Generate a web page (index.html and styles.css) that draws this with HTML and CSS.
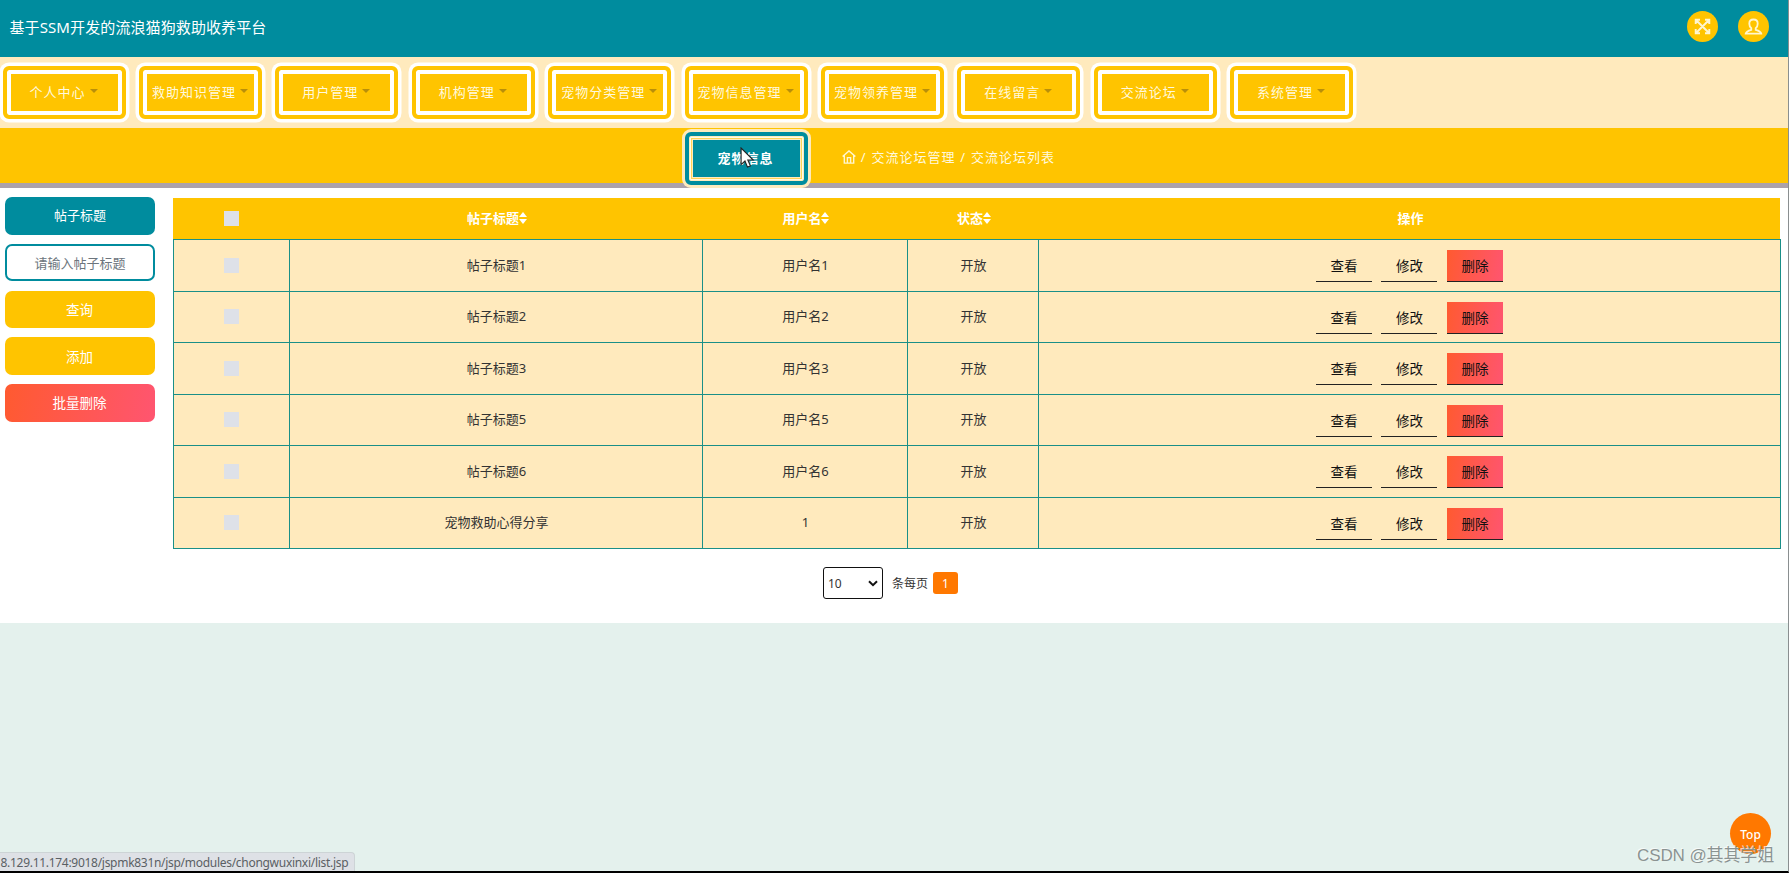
FILE: index.html
```html
<!DOCTYPE html>
<html lang="zh-CN">
<head>
<meta charset="utf-8">
<title>基于SSM开发的流浪猫狗救助收养平台</title>
<link rel="stylesheet" href="styles.css">
</head>
<body>
<div class="page">
<header class="topbar">
  <h1 class="brand">基于SSM开发的流浪猫狗救助收养平台</h1>
  <div class="tools">
    <span class="tool"><svg width="31" height="31" viewBox="0 0 31 31" fill="none" stroke="#fff6d0" stroke-width="1.9"><path d="M9 9l13 13M22 9L9 22M8.700 13V8.700H13M18 8.700h4.300V13M22.300 18v4.300H18M13 22.300H8.700V18"/></svg></span>
    <span class="tool"><svg width="31" height="31" viewBox="0 0 31 31" fill="none" stroke="#fff6d0" stroke-width="1.800"><path d="M13.300 17.200c-1.500-1.300-2-3-2-4.500 0-2.700 1.700-4.200 4.200-4.200s4.200 1.500 4.200 4.200c0 1.500-.5 3.200-2 4.500v1.600c3 .8 5.300 1.700 5.600 3.800H7.700c.3-2.100 2.600-3 5.600-3.800z"/></svg></span>
  </div>
</header>
<nav class="menu">
  <a class="item">个人中心<i class="caret"></i></a>
  <a class="item">救助知识管理<i class="caret"></i></a>
  <a class="item">用户管理<i class="caret"></i></a>
  <a class="item">机构管理<i class="caret"></i></a>
  <a class="item">宠物分类管理<i class="caret"></i></a>
  <div class="holder">
    <a class="item">宠物信息管理<i class="caret"></i></a>
    <a class="item sub">宠物信息</a>
  </div>
  <a class="item">宠物领养管理<i class="caret"></i></a>
  <a class="item">在线留言<i class="caret"></i></a>
  <a class="item">交流论坛<i class="caret"></i></a>
  <a class="item">系统管理<i class="caret"></i></a>
</nav>
<div class="crumbs">
  <svg width="14" height="14" viewBox="0 0 14 14" fill="none" stroke="#fff6d0" stroke-width="1.400"><path d="M.6 6.500L7 .9l6.400 5.600M2.300 5.500v7.600h9.400V5.500M5.400 13V7.600h3.200V13"/></svg>
  <span class="sep">/</span><span>交流论坛管理</span><span class="sep">/</span><span>交流论坛列表</span>
</div>
<main class="content">
  <aside class="side">
    <div class="btn teal">帖子标题</div>
    <div class="btn field">请输入帖子标题</div>
    <div class="btn">查询</div>
    <div class="btn">添加</div>
    <div class="btn red">批量删除</div>
  </aside>
  <section class="list">
    <div class="row head"><div><i class="box"></i></div><div>帖子标题<i class="sort"></i></div><div>用户名<i class="sort"></i></div><div>状态<i class="sort"></i></div><div>操作</div></div>
    <div class="row"><div><i class="box"></i></div><div>帖子标题1</div><div>用户名1</div><div>开放</div><div class="ops"><a>查看</a><a>修改</a><a class="del">删除</a></div></div>
    <div class="row"><div><i class="box"></i></div><div>帖子标题2</div><div>用户名2</div><div>开放</div><div class="ops"><a>查看</a><a>修改</a><a class="del">删除</a></div></div>
    <div class="row"><div><i class="box"></i></div><div>帖子标题3</div><div>用户名3</div><div>开放</div><div class="ops"><a>查看</a><a>修改</a><a class="del">删除</a></div></div>
    <div class="row"><div><i class="box"></i></div><div>帖子标题5</div><div>用户名5</div><div>开放</div><div class="ops"><a>查看</a><a>修改</a><a class="del">删除</a></div></div>
    <div class="row"><div><i class="box"></i></div><div>帖子标题6</div><div>用户名6</div><div>开放</div><div class="ops"><a>查看</a><a>修改</a><a class="del">删除</a></div></div>
    <div class="row"><div><i class="box"></i></div><div>宠物救助心得分享</div><div>1</div><div>开放</div><div class="ops"><a>查看</a><a>修改</a><a class="del">删除</a></div></div>
    <div class="pager">
      <div class="select"><span>10</span><svg width="10" height="7" viewBox="0 0 10 7" fill="none" stroke="#111" stroke-width="2"><path d="M1 1.200l4 4 4-4"/></svg></div>
      <span class="per">条每页</span>
      <span class="num">1</span>
    </div>
  </section>
</main>
<div class="status">8.129.11.174:9018/jspmk831n/jsp/modules/chongwuxinxi/list.jsp</div>
<div class="top">Top</div>
<div class="mark">CSDN @其其学姐</div>
<svg class="cursor" width="15" height="21" viewBox="0 0 13 19"><path d="M.7.900v15l3.500-3.200 2.300 5.500 2.600-1.100-2.300-5.300h4.900z" fill="#fff" stroke="#222" stroke-width="1"/></svg>
</div>
</body>
</html>
```
FILE: styles.css
```css
* { box-sizing: border-box; }
body { margin: 0; font-family: "Noto Sans", "Noto Sans CJK SC", sans-serif; font-size: 13px; color: #333; }
i { font-style: normal; }
.page { position: relative; width: 1789px; height: 873px; overflow: hidden; background: #e4f1ed; border-bottom: 2px solid #000; border-right: 1px solid #8a8f90; }
.topbar { height: 57px; background: #008c9e; display: flex; align-items: center; justify-content: space-between; padding: 0 19px 3px 9.500px; }
.brand { margin: 0; font-size: 15px; letter-spacing: .1px; font-weight: 400; color: #fff; line-height: 20px; white-space: nowrap; }
.tools { display: flex; gap: 20px; }
.tool { width: 31px; height: 31px; border-radius: 50%; background: #ffc400; display: flex; margin-top: -2px; }
.menu { height: 71px; background: #ffeabd; display: flex; gap: 13.400px; padding: 9px 0 0 2.600px; }
.item { flex: none; width: 123px; height: 53px; border: 4px solid #ffc400; border-radius: 6px; background: #ffc400; box-shadow: 0 0 0 3.500px #fff, inset 0 0 0 4px #fff; color: #fff9de; letter-spacing: 1px; display: flex; align-items: center; justify-content: center; white-space: nowrap; padding: 0 1px 2px 0; }
.caret { border: 4px solid transparent; border-top: 4px solid #b98f0a; border-bottom: 0; margin: -2px 0 0 4px; }
.holder { position: relative; flex: none; width: 123px; height: 53px; }
.sub { position: absolute; left: 0; top: 66px; z-index: 2; background: #008c9e; border-color: #008c9e; color: #fff; font-weight: 700; box-shadow: 0 0 0 3px #ffeabd, inset 0 0 0 1px #ffeabd, inset 0 0 0 2px #fffbe8, inset 0 0 0 3px #ffd458, inset 0 0 0 4px #ffeabd; }
.crumbs { height: 60px; background: #ffc400; border-bottom: 5px solid #aca2aa; padding: 2px 0 0 842px; display: flex; align-items: center; color: #fff9de; letter-spacing: 1px; }
.sep { width: 15.500px; text-align: center; }
.content { height: 435px; background: #fff; display: flex; padding: 9px 0 0 5px; gap: 18.400px; }
.side { width: 150px; display: flex; flex-direction: column; gap: 9.300px; }
.btn { height: 37.500px; border-radius: 7px; background: #ffc400; color: #fff; font-size: 13.500px; display: flex; align-items: center; justify-content: center; padding: 0 1px 1px 0; }
.teal { background: #008c9e; font-size: 13px; padding: 0 0 2px; }
.field { background: #fff; border: 2px solid #008c9e; color: #6c757d; font-size: 13px; padding: 0; }
.red { background: linear-gradient(100deg, #ff5a30, #ff5570); }
.list { width: 1608px; padding-top: 1px; }
.row { display: grid; grid-template-columns: 117px 413px 205px 131px 742px; height: 51.500px; background: #ffeabd; }
.row > div { display: flex; align-items: center; justify-content: center; border-right: 1px solid #1a8f88; border-bottom: 1px solid #1a8f88; padding: 0 0 2px; }
.row > div:first-child { border-left: 1px solid #1a8f88; padding: 0; }
.head { height: 42px; background: #ffc400; color: #fff; font-weight: 700; width: 1607px; }
.row.head > div { border-right: 0; border-left: 0; }
.box { width: 15px; height: 15px; background: #dee1e8; }
.sort { display: flex; flex-direction: column; gap: 2px; }
.sort::before { content: ""; border: 4.500px solid transparent; border-bottom: 5px solid #fff; border-top: 0; }
.sort::after { content: ""; border: 4.500px solid transparent; border-top: 5px solid #fff; border-bottom: 0; }
.row > .ops { gap: 9.500px; padding: 2px 1px 0 0; color: #111; }
.ops a { width: 56px; height: 32px; border-bottom: 1px solid #222; display: flex; align-items: center; justify-content: center; font-size: 13.500px; padding-bottom: 1px; }
.ops .del { background: linear-gradient(100deg, #ff5a30, #ff5570); }
.pager { display: flex; align-items: center; padding: 18.400px 0 0 649.600px; font-size: 12px; }
.select { width: 60px; height: 32px; border: 1px solid #111; border-radius: 3px; padding: 0 4px; display: flex; align-items: center; justify-content: space-between; }
.per { margin-left: 9px; width: 36px; white-space: nowrap; }
.num { margin-left: 5px; width: 25px; height: 22px; border-radius: 3px; background: #ff7800; color: #fff; display: flex; align-items: center; justify-content: center; }
.status { position: absolute; left: 0; bottom: 0; width: 355px; height: 19px; background: #dee1e6; border: 1px solid #cdd4d6; border-width: 1px 1px 0 0; border-radius: 0 4px 0 0; font-size: 12px; letter-spacing: -.29px; line-height: 20px; color: #5a5f64; white-space: nowrap; padding-left: .500px; }
.top { position: absolute; left: 1730px; top: 813px; width: 41px; height: 41px; border-radius: 50%; background: #ff7800; color: #fff; font-size: 12px; font-weight: 500; display: flex; align-items: center; justify-content: center; padding-top: 2px; }
.mark { position: absolute; left: 1637px; top: 844px; font-family: "Liberation Sans", "Noto Sans CJK SC", sans-serif; font-size: 17px; letter-spacing: -.1px; line-height: 24px; white-space: nowrap; color: #8b9392; text-shadow: -1px -1px 0 rgba(255,255,255,.7); }
.cursor { position: absolute; left: 740px; top: 147px; z-index: 5; }
```
